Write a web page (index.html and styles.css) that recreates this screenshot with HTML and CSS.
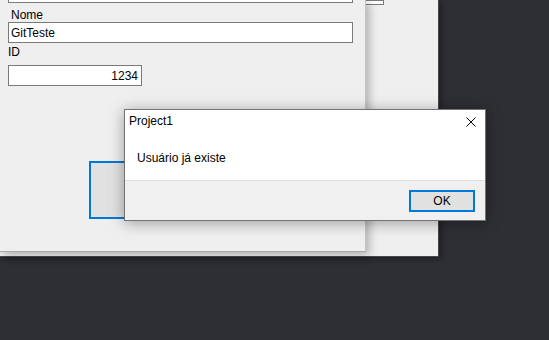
FILE: index.html
```html
<!DOCTYPE html>
<html lang="pt">
  <head>
    <meta charset="UTF-8" />
    <title>Project1</title>
    <link rel="stylesheet" href="styles.css">
  </head>
  <body>
    <div class="window back-window">
      <div class="edit back-edit"></div>
    </div>

    <div class="window front-window">
      <div class="form">
        <div class="edit top-edit"></div>
        <label class="label label-nome">Nome</label>
        <div class="edit wide">GitTeste</div>
        <label class="label">ID</label>
        <div class="edit short">1234</div>
        <div class="big-button"></div>
      </div>
    </div>

    <div class="dialog">
      <div class="dialog-main">
        <div class="dialog-title">
          <span>Project1</span>
          <svg class="close" width="10" height="10" viewBox="0 0 10 10">
            <path d="M0.5 0.5 L9.5 9.5 M9.5 0.5 L0.5 9.5" stroke="#000" stroke-width="1" fill="none" />
          </svg>
        </div>
        <div class="message">Usuário já existe</div>
      </div>
      <div class="dialog-footer">
        <button class="ok">OK</button>
      </div>
    </div>
  </body>
</html>
```

FILE: styles.css
```css
* {
  box-sizing: border-box;
}
body {
  margin: 0;
  width: 549px;
  height: 340px;
  overflow: hidden;
  background: #2e2f33;
  font-family: "Liberation Sans", Arial, sans-serif;
  font-size: 12px;
  color: #000;
  position: relative;
}
.window {
  position: absolute;
  left: 0;
  top: 0;
  background: #efefef;
}
.back-window {
  width: 439px;
  height: 257px;
  border-right: 1px solid #44464b;
  border-bottom: 1px solid #44464b;
  box-shadow: 2px 2px 6px rgba(0, 0, 0, 0.35);
}
.back-edit {
  width: 83px;
  height: 5px;
  margin-left: 301px;
  border-top: none;
}
.front-window {
  width: 366px;
  height: 252px;
  border-right: 1px solid #c4c4c4;
  border-bottom: 1px solid #a8a8a8;
  box-shadow: 3px 3px 9px rgba(0, 0, 0, 0.28);
}
.form {
  padding-left: 8px;
}
.edit {
  background: #fff;
  border: 1px solid #7a7a7a;
  line-height: 14px;
}
.top-edit {
  width: 345px;
  height: 3px;
  border-top: none;
}
.label {
  display: block;
  line-height: 13px;
  margin-top: 3px;
}
.label-nome {
  margin-top: 6px;
  padding-left: 3px;
}
.wide,
.short {
  display: flex;
  align-items: center;
  height: 21px;
}
.wide {
  width: 345px;
  padding-left: 2px;
}
.short {
  width: 134px;
  margin-top: 6px;
  justify-content: flex-end;
  padding-right: 3px;
}
.big-button {
  width: 190px;
  height: 58px;
  margin: 75px 0 0 81px;
  background: #e1e1e1;
  border: 2px solid #0078d7;
}
.dialog {
  position: absolute;
  left: 124px;
  top: 109px;
  width: 362px;
  height: 112px;
  border: 1px solid #737373;
  background: #f0f0f0;
  box-shadow: 0 2px 14px rgba(0, 0, 0, 0.35);
}
.dialog-main {
  height: 71px;
  background: #fff;
  border-bottom: 1px solid #dfdfdf;
}
.dialog-title {
  display: flex;
  justify-content: space-between;
  height: 30px;
  padding: 4px 9px 0 4px;
  line-height: 14px;
}
.close {
  margin-top: 3px;
}
.message {
  margin-top: 11px;
  padding-left: 12px;
  line-height: 14px;
}
.dialog-footer {
  display: flex;
  justify-content: flex-end;
  padding: 9px 10px 0 0;
}
.ok {
  width: 66px;
  height: 22px;
  padding: 0;
  background: #e1e1e1;
  border: 2px solid #0078d7;
  font-family: inherit;
  font-size: 12px;
  color: #000;
}
```
